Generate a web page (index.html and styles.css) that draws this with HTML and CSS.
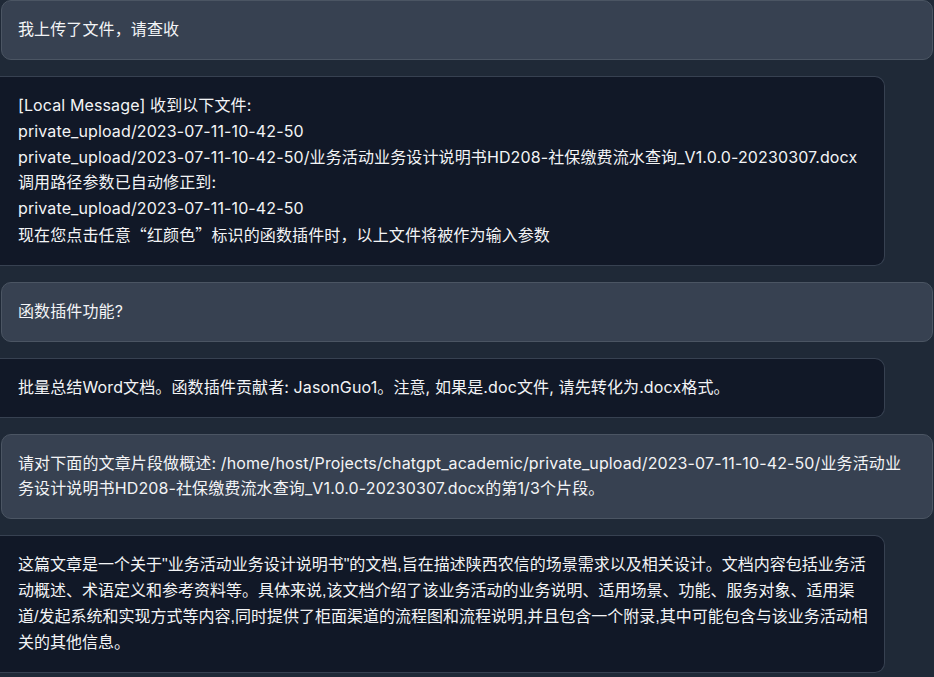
FILE: index.html
```html
<!DOCTYPE html>
<html lang="zh-CN">
<head>
    <meta charset="utf-8">
    <title>Chat</title>
    <link rel="stylesheet" href="styles.css">
</head>
<body>
    <div class="chat">
        <div class="message user">我上传了文件，请查收</div>

        <div class="message bot">
            [Local Message] 收到以下文件:<br>
            private_upload/2023-07-11-10-42-50<br>
            private_upload/2023-07-11-10-42-50/业务活动业务设计说明书HD208-社保缴费流水查询_V1.0.0-20230307.docx<br>
            调用路径参数已自动修正到:<br>
            private_upload/2023-07-11-10-42-50<br>
            现在您点击任意<span class="cjk">“</span>红颜色<span class="cjk">”</span>标识的函数插件时，以上文件将被作为输入参数
        </div>

        <div class="message user">函数插件功能?</div>

        <div class="message bot">批量总结Word文档。函数插件贡献者: JasonGuo1。注意, 如果是.doc文件, 请先转化为.docx格式。</div>

        <div class="message user">请对下面的文章片段做概述: /home/host/Projects/chatgpt_academic/private_upload/2023-07-11-10-42-50/业务活动业务设计说明书HD208-社保缴费流水查询_V1.0.0-20230307.docx的第1/3个片段。</div>

        <div class="message bot zh">这篇文章是一个关于"业务活动业务设计说明书"的文档,旨在描述陕西农信的场景需求以及相关设计。文档内容包括业务活动概述、术语定义和参考资料等。具体来说,该文档介绍了该业务活动的业务说明、适用场景、功能、服务对象、适用渠道/发起系统和实现方式等内容,同时提供了柜面渠道的流程图和流程说明,并且包含一个附录,其中可能包含与该业务活动相关的其他信息。</div>
    </div>
</body>
</html>
```

FILE: styles.css
```css
body {
    margin: 0;
    background-color: #1f2937;
    color: #f3f4f6;
    font-family: Inter, "Noto Sans CJK SC", sans-serif;
    font-size: 16px;
    line-height: 25.84px;
    overflow: hidden;
}

.chat {
    display: flex;
    flex-direction: column;
    gap: 16px;
    padding-left: 1px;
    padding-right: 1px;
}

.message {
    padding: 16px;
    border-radius: 10px;
    letter-spacing: 0.12px;
    word-break: break-all;
}

.user {
    background-color: #374151;
    border: 1px solid #4b5563;
}

.bot {
    width: 850px;
    margin-left: -1px;
    padding-left: 18px;
    background-color: #111827;
    border: 1px solid #374151;
    border-left: none;
    border-radius: 0 10px 10px 0;
}

/* mostly chinese text, keep the narrow punctuation */
.zh {
    font-family: "Liberation Sans", "Noto Sans CJK SC", sans-serif;
    line-height: 26px;
    letter-spacing: 0;
}

.cjk {
    font-family: "Noto Sans CJK SC", sans-serif;
}
```
